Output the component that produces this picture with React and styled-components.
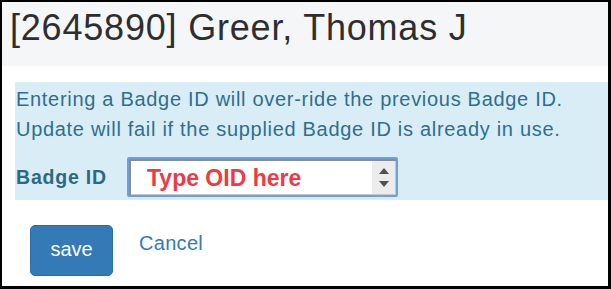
import React from "react";
import styled, { createGlobalStyle } from "styled-components";

const GlobalStyle = createGlobalStyle`
  html, body {
    margin: 0;
    padding: 0;
    background: #ffffff;
  }
  body {
    font-family: "Liberation Sans", Arial, Helvetica, sans-serif;
  }
`;

const Frame = styled.div`
  width: 611px;
  height: 289px;
  box-sizing: border-box;
  border-style: solid;
  border-color: #000000;
  border-width: 2px 3px 3px 2px;
  background: #ffffff;
  overflow: hidden;
`;

const Header = styled.div`
  height: 64px;
  box-sizing: border-box;
  padding: 0 0 10px 8px;
  background: #f4f6f8;
`;

const Title = styled.h1`
  margin: 0;
  font-size: 36px;
  font-weight: normal;
  line-height: 52px;
  letter-spacing: 0.8px;
  color: #2e2e2e;
  white-space: nowrap;
`;

const Alert = styled.div`
  margin: 16px 0 0 13px;
  padding: 2px 0 3px 1px;
  background: #d9edf7;
  color: #2f6e8e;
`;

const Message = styled.p`
  margin: 0;
  font-size: 20px;
  line-height: 30px;
  letter-spacing: 0.7px;
  white-space: nowrap;
`;

const FormRow = styled.div`
  display: flex;
  align-items: center;
  margin-top: 13px;
`;

const Label = styled.label`
  width: 111px;
  font-size: 19.5px;
  font-weight: bold;
  letter-spacing: 0.8px;
  color: #2c6987;
`;

const InputBox = styled.div`
  display: flex;
  align-items: center;
  width: 271px;
  height: 40px;
  box-sizing: border-box;
  border: 2px solid #6b9fe6;
  border-radius: 2px;
  background: #ffffff;
  box-shadow: inset 2px 2px 0 #8c8c8c, inset -1px -1px 0 #c8c8c8;
`;

const TextInput = styled.input`
  flex: 1;
  min-width: 0;
  height: 100%;
  box-sizing: border-box;
  padding: 2px 0 0 18px;
  border: none;
  outline: none;
  background: transparent;
  font-family: "Liberation Sans", Arial, sans-serif;
  font-size: 23px;
  font-weight: bold;
  color: #ee3a43;
`;

const Spinner = styled.div`
  display: flex;
  flex-direction: column;
  align-items: center;
  justify-content: center;
  gap: 7px;
  width: 23px;
  height: 33px;
  margin: 1px 1px 0 0;
  background: #ececec;
`;

const Arrow = styled.span`
  width: 0;
  height: 0;
  border-left: 5px solid transparent;
  border-right: 5px solid transparent;
  ${({ $dir }) =>
    $dir === "up"
      ? "border-bottom: 6px solid #505050;"
      : "border-top: 6px solid #505050;"}
`;

const Actions = styled.div`
  display: flex;
  align-items: flex-start;
  margin-top: 25px;
  padding-left: 28px;
`;

const SaveButton = styled.button`
  width: 83px;
  height: 51px;
  box-sizing: border-box;
  padding: 0 0 2px;
  border: 1px solid #2e6da4;
  border-radius: 5px;
  background: #337ab7;
  color: #ffffff;
  font-family: "Liberation Sans", Arial, sans-serif;
  font-size: 20px;
  cursor: pointer;
`;

const CancelLink = styled.a`
  margin: 7px 0 0 26px;
  font-size: 20px;
  letter-spacing: 0.3px;
  color: #337ab7;
  text-decoration: none;
  cursor: pointer;
`;

export default function App() {
  return (
    <>
      <GlobalStyle />
      <Frame>
        <Header>
          <Title>[2645890] Greer, Thomas J</Title>
        </Header>
        <Alert>
          <Message>Entering a Badge ID will over-ride the previous Badge ID.</Message>
          <Message>Update will fail if the supplied Badge ID is already in use.</Message>
          <FormRow>
            <Label htmlFor="badge">Badge ID</Label>
            <InputBox>
              <TextInput id="badge" defaultValue="Type OID here" />
              <Spinner>
                <Arrow $dir="up" />
                <Arrow $dir="down" />
              </Spinner>
            </InputBox>
          </FormRow>
        </Alert>
        <Actions>
          <SaveButton>save</SaveButton>
          <CancelLink>Cancel</CancelLink>
        </Actions>
      </Frame>
    </>
  );
}
